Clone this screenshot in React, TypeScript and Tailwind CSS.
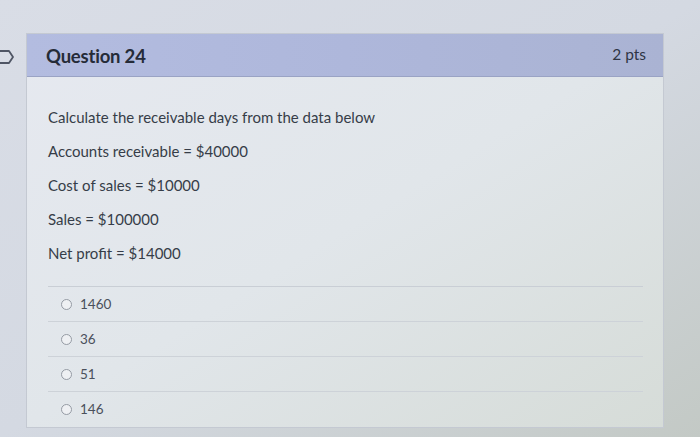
const answers = ['1460', '36', '51', '146'];

const lines = [
  'Calculate the receivable days from the data below',
  'Accounts receivable = $40000',
  'Cost of sales = $10000',
  'Sales = $100000',
  'Net profit = $14000',
];

export default function App() {
  return (
    <div
      className="w-[700px] h-[437px] overflow-hidden bg-gradient-to-br from-[#d9dde6] via-[#d4d9e2] to-[#c3c9c5] text-[#353c47]"
      style={{ fontFamily: 'Lato, "Open Sans", sans-serif' }}
    >
      <div className="flex pt-[33px]">
        <div className="w-[26px] shrink-0 pt-[16px]">
          <svg width="18" height="16" viewBox="0 0 18 16" className="-ml-[3px]">
            <path
              d="M1 2 H12 L16 8 L12 14 H1"
              fill="none"
              stroke="#4f5564"
              strokeWidth="1.8"
              strokeLinejoin="round"
            />
          </svg>
        </div>

        <div className="w-[638px] border border-[#c4c9d2] bg-gradient-to-br from-[#e6e9f0] via-[#e1e6ea] to-[#d6dcd8]">
          <div className="flex items-center justify-between h-[43px] bg-gradient-to-r from-[#b3bce0] via-[#aeb7db] to-[#aab3d3] border-b border-[#9aa3c4] pl-[19px] pr-[17px]">
            <h2 className="text-[18.5px] font-bold text-[#252b38] tracking-[-0.2px] pt-[3px]">Question 24</h2>
            <span className="text-[15.5px] text-[#2f3544]">2 pts</span>
          </div>

          <div className="pl-[21px] pr-[20px] pt-[32px]">
            <div className="flex flex-col gap-[18px] text-[15px] leading-[16px] text-[#363d48]">
              {lines.map((l) => (
                <p key={l}>{l}</p>
              ))}
            </div>

            <div className="mt-[25px] border-t border-[#c9ced5]">
              {answers.map((a) => (
                <div
                  key={a}
                  className="flex items-center h-[35px] pl-[13px] border-b border-[#cdd2d8] last:border-b-0"
                >
                  <span className="w-[11px] h-[11px] rounded-full border border-[#959ba4] bg-[#eef0f3] mr-[8px]" />
                  <span className="text-[13.5px] text-[#4a505b]">{a}</span>
                </div>
              ))}
            </div>
          </div>
        </div>
      </div>
    </div>
  );
}
